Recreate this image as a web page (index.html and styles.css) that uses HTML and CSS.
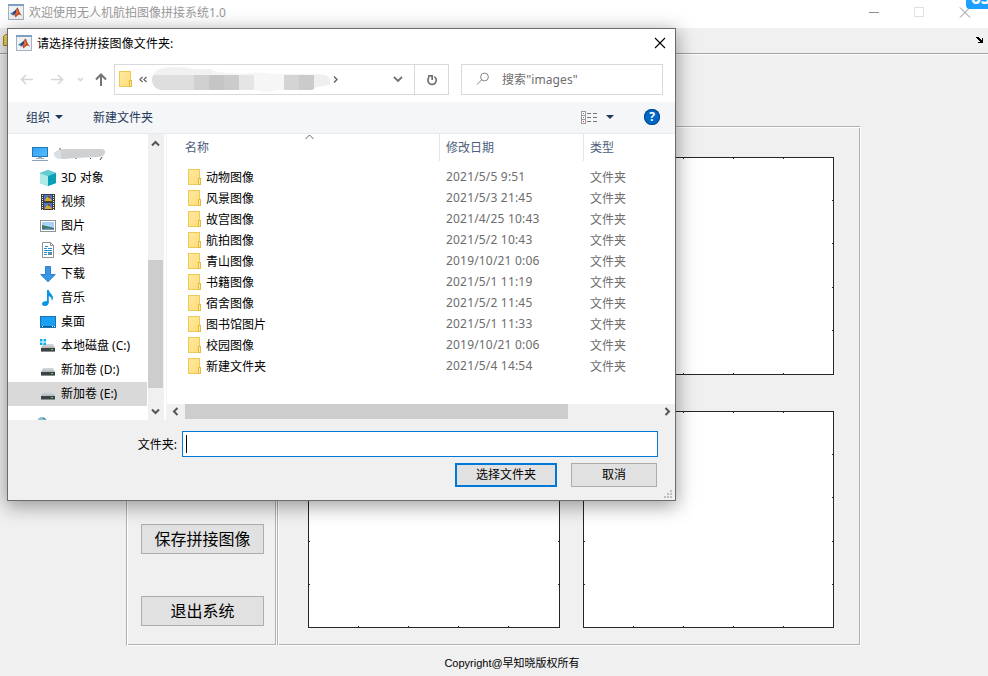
FILE: index.html
```html
<!DOCTYPE html>
<html lang="zh-CN">
<head>
  <meta charset="UTF-8">
  <meta name="viewport" content="width=device-width, initial-scale=1.0">
  <title>欢迎使用无人机航拍图像拼接系统1.0</title>
  <link rel="stylesheet" href="styles.css">
</head>
<body>

  <!-- Shared icons -->
  <svg class="icon-defs" width="0" height="0">
    <linearGradient id="folderFill" x1="0" y1="0" x2="1" y2="1">
      <stop offset="0" stop-color="#ffe9a2"/><stop offset="1" stop-color="#ffdc78"/>
    </linearGradient>
    <linearGradient id="screenFill" x1="0" y1="0" x2="1" y2="1">
      <stop offset="0" stop-color="#2ba0f5"/><stop offset="1" stop-color="#5cc0ff"/>
    </linearGradient>
    <linearGradient id="driveTop" x1="0" y1="0" x2="0" y2="1">
      <stop offset="0" stop-color="#d9dcde"/><stop offset="1" stop-color="#b3b6b9"/>
    </linearGradient>
    <symbol id="matlab" viewBox="0 0 16 16">
      <rect x=".5" y=".5" width="15" height="15" fill="#edf1f4" stroke="#a3b1c0"/>
      <rect x="0" y="0" width="16" height="2" fill="#7f9fc0"/>
      <path d="M2 9.500l3-1.500 2 1.500-2 2z" fill="#3d86c0"/>
      <path d="M5 8l2-1.500L9 4l-1 5-2.500 2.500L5 10z" fill="#36436e"/>
      <path d="M9 3.500l1 .5 1.500 4 2.500 4-2-1.500-2 .5-2.500 2.500-1-2.500L8 9z" fill="#c9421f"/>
      <path d="M9 5l.8 4-1.500 2.500z" fill="#ec9a45"/>
    </symbol>
    <symbol id="folder" viewBox="0 0 13 16">
      <rect x=".5" y=".5" width="11" height="15" fill="url(#folderFill)" stroke="#eeca55"/>
      <rect x="10.5" y="9.5" width="2" height="6" fill="#ffe9a2" stroke="#e3bb3d"/>
    </symbol>
    <symbol id="drive" viewBox="0 0 16 16">
      <path d="M3 6h10l2 4H1z" fill="url(#driveTop)"/>
      <rect x="1" y="10" width="14" height="4" fill="#3f4245"/>
      <rect x="1" y="13" width="14" height="1" fill="#8a8d90"/>
      <rect x="11" y="11" width="2" height="1" fill="#35f04c"/>
    </symbol>
  </svg>

  <div class="main-titlebar">
    <svg class="app-icon" width="16" height="16"><use href="#matlab"/></svg>
    <span class="main-title">欢迎使用无人机航拍图像拼接系统1.0</span>
    <svg class="window-controls" width="104" height="12" fill="none">
      <path d="M0 6.500h10" stroke="#8c8c8c"/>
      <rect x="45.500" y="1.500" width="9" height="9" stroke="#e0e0e0"/>
      <path d="M91 1.500l10 10M101 1.500l-10 10" stroke="#8c8c8c"/>
    </svg>
  </div>
  <div class="badge">63</div>

  <div class="main-toolbar">
    <svg width="16" height="16" viewBox="0 0 16 16"><path d="M1.500 13.500v-9l2-2h4l1 2h5v9z" fill="#f0d460" stroke="#a88414"/></svg>
    <svg class="dock-arrow" width="8" height="6"><path d="M0 0h3v1h1v1h1v1h1V1h1v5H2V5h2V4H3V3H2V2H1V1H0z" fill="#000"/></svg>
  </div>

  <div class="workspace">
    <div class="panel control-panel">
      <button class="main-btn">保存拼接图像</button>
      <button class="main-btn">退出系统</button>
    </div>
    <div class="panel axes-panel">
      <div class="axes"></div>
      <div class="axes"></div>
      <div class="axes"></div>
      <div class="axes"></div>
    </div>
  </div>
  <div class="copyright">Copyright@早知晓版权所有</div>

  <div class="dialog">
    <div class="dialog-titlebar">
      <svg width="16" height="16"><use href="#matlab"/></svg>
      <span class="dialog-title">请选择待拼接图像文件夹:</span>
      <svg class="dialog-close" width="12" height="12"><path d="M1 1l10 10M11 1L1 11" stroke="#000" stroke-width="1.100"/></svg>
    </div>

    <div class="nav-row">
      <svg class="nav-arrows" width="88" height="16" fill="none" stroke-width="1.700">
        <path d="M13 7.500H1.500M6 3L1.500 7.500 6 12" stroke="#d6d6d6"/>
        <path d="M31 7.500h11.500M38 3l4.500 4.500L38 12" stroke="#d6d6d6"/>
        <path d="M58 6l2.500 2.500L63 6" stroke="#d6d6d6"/>
        <path d="M81 14V2.500M76 7.500l5-5 5 5" stroke="#737373" stroke-width="2"/>
      </svg>
      <div class="address">
        <svg class="address-folder" width="13" height="16"><use href="#folder"/></svg>
        <svg class="address-path" width="201" height="28">
          <path d="M5.500 11L3 13.500 5.500 16M9.500 11L7 13.500 9.500 16" fill="none" stroke="#666" stroke-width="1.300"/>
          <clipPath id="smudge"><path d="M15 13Q16 6 22 3Q38-1 57 3H73L80 6L105 8Q118 5 135 8H175Q190 7 193 13V19L180 21L175 24H140Q130 28 118 24H24Q15 22 15 14z"/></clipPath>
          <g clip-path="url(#smudge)">
            <rect x="15" y="0" width="60" height="10" fill="#f1f1f1"/>
            <rect x="75" y="0" width="120" height="10" fill="#f5f5f5"/>
            <rect x="15" y="9" width="42" height="15" fill="#dedede"/>
            <rect x="57" y="9" width="15" height="15" fill="#d0d0d0"/>
            <rect x="72" y="9" width="15" height="15" fill="#c5c5c5"/>
            <rect x="87" y="9" width="15" height="15" fill="#cbcbcb"/>
            <rect x="102" y="9" width="15" height="15" fill="#e5e5e5"/>
            <rect x="117" y="9" width="30" height="18" fill="#f6f6f6"/>
            <rect x="147" y="9" width="15" height="15" fill="#d4d4d4"/>
            <rect x="162" y="9" width="15" height="15" fill="#cbcbcb"/>
            <rect x="177" y="9" width="18" height="15" fill="#efefef"/>
          </g>
          <path d="M197 10.500l3 3-3 3" fill="none" stroke="#666" stroke-width="1.500"/>
        </svg>
        <svg class="address-drop" width="10" height="7"><path d="M1 1l4 4 4-4" fill="none" stroke="#707070" stroke-width="1.800"/></svg>
        <div class="refresh">
          <svg width="12" height="12" fill="none" stroke="#707070" stroke-width="1.700"><path d="M8.300 2.600A4.200 4.200 0 1 1 3.200 3.100M2 1.800h4.200V6"/></svg>
        </div>
      </div>
      <div class="search">
        <svg width="14" height="14" fill="none" stroke="#858585"><circle cx="8.500" cy="5" r="3.900"/><path d="M5.700 7.800L1 12.500"/></svg>
        <span>搜索"images"</span>
      </div>
    </div>

    <div class="command-bar">
      <span>组织</span>
      <i class="caret"></i>
      <span class="new-folder">新建文件夹</span>
      <svg class="view-icon" width="17" height="13">
        <rect x=".5" y=".5" width="4" height="12" fill="#fff" stroke="#999"/>
        <path d="M0 4.500h5M0 8.500h5" stroke="#999"/>
        <rect x="2" y="2" width="1" height="1" fill="#777"/><rect x="2" y="6" width="1" height="1" fill="#3492d8"/><rect x="2" y="10" width="1" height="1" fill="#d22"/>
        <path d="M6 2.500h4M12 2.500h4M6 6.500h4M12 6.500h4M6 10.500h4M12 10.500h4" stroke="#777"/>
      </svg>
      <i class="caret"></i>
      <span class="help">?</span>
    </div>

    <div class="dialog-body">
      <div class="tree">
        <div class="tree-item root">
          <svg width="18" height="16"><rect x="1.500" y="1.500" width="15" height="9" fill="url(#screenFill)" stroke="#2277b5"/><path d="M7 11h4v1H7zM5 12h8v1H5z" fill="#9cb3c5"/><path d="M1 14.500h16" stroke="#8ba3b8"/></svg>
          <svg class="smear" width="54" height="14"><path d="M6 1v2M22 11v1M37 11l-1 1M48 10l-2 3" stroke="#444"/><path d="M0 6Q4 2 11 2H47Q52 2 51 6Q50 10 43 10L20 11Q2 14 0 8z" fill="#cfd0d1"/><path d="M0 6l7-3v9Q1 12 0 8z" fill="#d8e1e8"/></svg>
        </div>
        <div class="tree-item">
          <svg width="16" height="16"><path d="M0 3l8-3 8 3v10l-8 3-8-3z" fill="#25b6c8"/><path d="M0 3l8 3v10l-8-3z" fill="#aee9e5"/><path d="M8 6l8-3v10l-8 3z" fill="#0a9eb7"/><path d="M0 3l8-3 8 3-8 3z" fill="#63cbd2"/></svg>
          <span>3D 对象</span>
        </div>
        <div class="tree-item">
          <svg width="16" height="16"><rect x="1" width="14" height="16" fill="#3d3d3d"/><path d="M2.500 1v15M13.500 1v15" stroke="#eee" stroke-dasharray="1 1"/><rect x="4" y="1" width="8" height="6" fill="#4878c4"/><rect x="4" y="9" width="8" height="6" fill="#4878c4"/><path d="M5 6l2-3 2 1 3 2v1H5zM5 14l2-3 2 1 3 2v1H5z" fill="#dcab2b"/><path d="M8 2h2v2H8zM8 10h2v2H8z" fill="#a34725"/></svg>
          <span>视频</span>
        </div>
        <div class="tree-item">
          <svg width="16" height="16"><rect x=".5" y="2.500" width="15" height="11" fill="#fff" stroke="#929292"/><rect x="2" y="4" width="12" height="8" fill="#a8d2f5"/><path d="M2 7l4 1 8 2v2H2z" fill="#42706b"/><path d="M2 11q6-1 12 0v1H2z" fill="#6aa0ba"/></svg>
          <span>图片</span>
        </div>
        <div class="tree-item">
          <svg width="16" height="16"><path d="M2.500.5h8l3 3v12h-11z" fill="#fff" stroke="#8f8f8f"/><path d="M10.500.5v3h3" fill="none" stroke="#8f8f8f"/><path d="M5 4.500h3M4 6.500h3M8 6.500h4M4 8.500h8M4 10.500h3M4 12.500h3" stroke="#2b8fd8"/><path d="M8 10h4v3H8z" fill="#5b91a8"/></svg>
          <span>文档</span>
        </div>
        <div class="tree-item">
          <svg width="16" height="16"><path d="M5.500.5h5v8h4.800L8 15.700.7 8.500h4.800z" fill="#3a96e3" stroke="#2a82cf"/></svg>
          <span>下载</span>
        </div>
        <div class="tree-item">
          <svg width="16" height="16"><path d="M7 0h1.800q.4 2.500 2.800 4.500Q14.500 8 11.500 11q1-3.500-2.700-5v7Q8 16 5 16q-3 0-3-2.200Q2.500 11 7 11z" fill="#0795e6"/></svg>
          <span>音乐</span>
        </div>
        <div class="tree-item">
          <svg width="16" height="16"><rect x=".5" y="2.500" width="15" height="11" fill="#1b9ff3" stroke="#1474b4"/><path d="M1 12.500h14" stroke="#0a5a96"/><path d="M2 12.500h1M12 12.500h1M14 12.500h1" stroke="#fff"/></svg>
          <span>桌面</span>
        </div>
        <div class="tree-item">
          <svg width="16" height="16"><use href="#drive"/><path d="M0 1h2.500v2.500H0zM3.500 1H6v2.500H3.500zM0 4.500h2.500V7H0zM3.500 4.500H6V7H3.500z" fill="#06b3ea"/></svg>
          <span>本地磁盘 (C:)</span>
        </div>
        <div class="tree-item">
          <svg width="16" height="16"><use href="#drive"/></svg>
          <span>新加卷 (D:)</span>
        </div>
        <div class="tree-item selected">
          <svg width="16" height="16"><use href="#drive"/></svg>
          <span>新加卷 (E:)</span>
        </div>
        <div class="tree-item network">
          <svg width="16" height="16"><circle cx="8" cy="8" r="5" fill="#8fc0d3"/><path d="M8 4q3-1 4 2z" fill="#3a7fa8"/></svg>
        </div>
      </div>
      <div class="vscroll">
        <svg width="9" height="7"><path d="M1 5.500L4.500 2 8 5.500" fill="none" stroke="#555" stroke-width="2"/></svg>
        <div class="vthumb"></div>
        <svg width="9" height="7"><path d="M1 1.500L4.500 5 8 1.500" fill="none" stroke="#555" stroke-width="2"/></svg>
      </div>

      <div class="file-view">
        <div class="file-header">
          <span class="col-name">名称</span>
          <svg class="sort-mark" width="9" height="6"><path d="M.5 5l4-4 4 4" fill="none" stroke="#666"/></svg>
          <span class="col-date">修改日期</span>
          <span class="col-type">类型</span>
        </div>
        <div class="file-list">
          <div class="file-row"><svg width="13" height="16"><use href="#folder"/></svg><span class="name">动物图像</span><span class="date">2021/5/5 9:51</span><span>文件夹</span></div>
          <div class="file-row"><svg width="13" height="16"><use href="#folder"/></svg><span class="name">风景图像</span><span class="date">2021/5/3 21:45</span><span>文件夹</span></div>
          <div class="file-row"><svg width="13" height="16"><use href="#folder"/></svg><span class="name">故宫图像</span><span class="date">2021/4/25 10:43</span><span>文件夹</span></div>
          <div class="file-row"><svg width="13" height="16"><use href="#folder"/></svg><span class="name">航拍图像</span><span class="date">2021/5/2 10:43</span><span>文件夹</span></div>
          <div class="file-row"><svg width="13" height="16"><use href="#folder"/></svg><span class="name">青山图像</span><span class="date">2019/10/21 0:06</span><span>文件夹</span></div>
          <div class="file-row"><svg width="13" height="16"><use href="#folder"/></svg><span class="name">书籍图像</span><span class="date">2021/5/1 11:19</span><span>文件夹</span></div>
          <div class="file-row"><svg width="13" height="16"><use href="#folder"/></svg><span class="name">宿舍图像</span><span class="date">2021/5/2 11:45</span><span>文件夹</span></div>
          <div class="file-row"><svg width="13" height="16"><use href="#folder"/></svg><span class="name">图书馆图片</span><span class="date">2021/5/1 11:33</span><span>文件夹</span></div>
          <div class="file-row"><svg width="13" height="16"><use href="#folder"/></svg><span class="name">校园图像</span><span class="date">2019/10/21 0:06</span><span>文件夹</span></div>
          <div class="file-row"><svg width="13" height="16"><use href="#folder"/></svg><span class="name">新建文件夹</span><span class="date">2021/5/4 14:54</span><span>文件夹</span></div>
        </div>
        <div class="hscroll">
          <svg width="7" height="9"><path d="M5.500 1L2 4.500 5.500 8" fill="none" stroke="#555" stroke-width="2"/></svg>
          <div class="hthumb"></div>
          <svg width="7" height="9"><path d="M1.500 1L5 4.500 1.500 8" fill="none" stroke="#555" stroke-width="2"/></svg>
        </div>
      </div>
    </div>

    <div class="dialog-footer">
      <div class="folder-field">
        <span class="field-label">文件夹:</span>
        <div class="folder-input"><i class="text-cursor"></i></div>
      </div>
      <div class="dialog-actions">
        <button class="dialog-btn primary">选择文件夹</button>
        <button class="dialog-btn">取消</button>
      </div>
      <svg class="grip" width="8" height="8" fill="#bfbfbf"><path d="M6 0h2v2H6zM3 3h2v2H3zM6 3h2v2H6zM0 6h2v2H0zM3 6h2v2H3zM6 6h2v2H6z"/></svg>
    </div>
  </div>

</body>
</html>
```
FILE: styles.css
```css
* { margin: 0; padding: 0; box-sizing: border-box; }
body {
  width: 988px;
  height: 676px;
  overflow: hidden;
  background: #f0f0f0;
  font-family: "Noto Sans", "Noto Sans CJK SC", sans-serif;
  font-size: 12px;
  color: #000;
  position: relative;
}
svg { display: block; flex-shrink: 0; }
span { white-space: nowrap; }
button { font-family: inherit; }
.icon-defs { position: absolute; }

/* Main window */
.main-titlebar {
  height: 28px;
  background: #fff;
  display: flex;
  align-items: center;
  padding: 0 15px 4px 8px;
}
.main-title { margin-left: 5px; color: #999; }
.window-controls { margin-left: auto; }
.badge {
  position: absolute;
  top: -14px;
  left: 966px;
  width: 40px;
  height: 23px;
  padding-left: 5px;
  border-radius: 4px;
  background: #1e9fff;
  color: #fff;
  font-size: 17px;
  font-weight: bold;
  line-height: 24px;
}
.main-toolbar {
  height: 27px;
  display: flex;
  align-items: center;
  justify-content: space-between;
  padding: 0 4px 2px 2px;
  border-bottom: 1px solid #fff;
  box-shadow: inset 0 -1px #a0a0a0;
}
.workspace { display: flex; padding: 71px 0 0 126px; }
.panel {
  height: 520px;
  border: 1px solid #b0b0b0;
  border-right-color: #fff;
  border-bottom-color: #fff;
  box-shadow: inset 1px 1px #fff, inset -1px -1px #b0b0b0;
}
.control-panel {
  width: 151px;
  display: flex;
  flex-direction: column;
  align-items: flex-start;
  justify-content: flex-end;
  gap: 42px;
  padding: 0 0 19px 14px;
}
.main-btn {
  width: 123px;
  height: 30px;
  background: #e1e1e1;
  border: 1px solid #adadad;
  font-size: 16px;
  line-height: 26px;
}
.axes-panel {
  width: 584px;
  display: grid;
  grid-template-columns: 252px 251px;
  grid-template-rows: 218px 217px;
  gap: 36px 23px;
  padding: 30px 0 0 30px;
}
.axes {
  border: 1px solid #262626;
  background:
    repeating-linear-gradient(90deg, transparent 0 49px, #262626 49px 50px) 0 0 / 248px 1px no-repeat,
    repeating-linear-gradient(90deg, transparent 0 49px, #262626 49px 50px) 0 100% / 248px 1px no-repeat,
    repeating-linear-gradient(transparent 0 42.2px, #262626 42.2px 43.2px) 0 0 / 1px 214px no-repeat,
    repeating-linear-gradient(transparent 0 42.2px, #262626 42.2px 43.2px) 100% 0 / 1px 214px no-repeat,
    #fff;
}
.copyright {
  padding: 8px 0 0 36px;
  text-align: center;
  font-family: "Liberation Sans", "Noto Sans CJK SC", sans-serif;
  font-size: 11px;
}

/* Folder dialog */
.dialog {
  position: absolute;
  left: 7px;
  top: 28px;
  width: 669px;
  height: 473px;
  display: flex;
  flex-direction: column;
  background: #fff;
  border: 1px solid #6b6b6b;
  box-shadow: 0 4px 18px 1px rgba(0,0,0,0.38);
}
.dialog-titlebar {
  height: 28px;
  display: flex;
  align-items: center;
  padding: 0 9px 0 8px;
}
.dialog-title { margin-left: 5px; letter-spacing: 0.1px; }
.dialog-close { margin-left: auto; }
.nav-row {
  height: 45px;
  display: flex;
  padding: 7px 12px 7px 12px;
}
.nav-arrows { margin-top: 8px; }
.address {
  width: 335px;
  height: 31px;
  margin-left: 6px;
  border: 1px solid #d9d9d9;
  display: flex;
  align-items: center;
}
.address-folder { margin: 0 5px 2px 4px; }
.address-path { margin-right: 55px; }
.refresh {
  width: 34px;
  height: 29px;
  margin-left: auto;
  border-left: 1px solid #d9d9d9;
  display: flex;
  align-items: center;
  justify-content: center;
}
.search {
  width: 202px;
  height: 31px;
  margin-left: 12px;
  padding: 0 0 1px 14px;
  border: 1px solid #d9d9d9;
  display: flex;
  align-items: center;
  gap: 12px;
  color: #6d6d6d;
  letter-spacing: 0.1px;
}
.command-bar {
  height: 32px;
  background: #f5f6f7;
  border-bottom: 1px solid #e8e9eb;
  display: flex;
  align-items: center;
  padding: 0 15px 1px 18px;
  color: #1e395b;
}
.caret {
  margin-left: 5px;
  border: 4px solid transparent;
  border-top-color: #1e395b;
  border-bottom: 0;
}
.new-folder { margin-left: 30px; }
.view-icon { margin-left: auto; }
.view-icon + .caret { margin-left: 8px; }
.help {
  width: 16px;
  height: 16px;
  margin-left: 30px;
  border-radius: 50%;
  background: #0067c6;
  box-shadow: inset 0 0 0 1px #074a8b;
  color: #fff;
  font-weight: bold;
  line-height: 16px;
  text-align: center;
}
.dialog-body { height: 286px; display: flex; }
.tree { width: 140px; padding-top: 8px; overflow: hidden; }
.tree-item {
  width: 139px;
  height: 24px;
  display: flex;
  align-items: center;
  gap: 5px;
  padding-left: 32px;
}
.tree-item span { padding-bottom: 2px; }
.tree-item.root { padding-left: 23px; }
.tree-item.selected { background: #d9d9d9; }
.tree-item.network { padding: 8px 0 0 26px; }
.vscroll {
  width: 16px;
  background: #f0f0f0;
  display: flex;
  flex-direction: column;
  align-items: flex-start;
  padding: 6px 0 5px;
}
.vscroll svg { margin-left: 3px; }
.vthumb { width: 15px; height: 128px; margin: 113px 0 20px; background: #cdcdcd; }
.file-view {
  flex: 1;
  margin-left: 2px;
  border-left: 1px solid #f3f3f3;
}
.file-header {
  height: 27px;
  display: flex;
  color: #4c607a;
  line-height: 28px;
}
.col-name { width: 138px; padding-left: 18px; }
.sort-mark { width: 9px; margin-right: 125px; }
.col-date { width: 144px; padding-left: 6px; border-left: 1px solid #e5e5e5; }
.col-type { padding-left: 6px; border-left: 1px solid #e5e5e5; }
.file-list { height: 243px; padding: 6px 0 0 21px; }
.file-row {
  height: 21px;
  display: flex;
  align-items: center;
  color: #6d6d6d;
}
.file-row svg { margin-bottom: 1px; }
.file-row span { padding-bottom: 2px; }
.name { width: 240px; margin-left: 5px; color: #000; }
.date { width: 144px; letter-spacing: 0.18px; }
.hscroll {
  height: 16px;
  background: #f0f0f0;
  display: flex;
  align-items: center;
  padding: 0 4px 1px 5px;
}
.hthumb { width: 383px; height: 15px; margin: 0 auto 0 6px; background: #cdcdcd; }
.dialog-footer {
  flex: 1;
  background: #f0f0f0;
  padding: 11px 17px 0 0;
  position: relative;
}
.folder-field {
  display: flex;
  align-items: center;
  justify-content: flex-end;
  gap: 5px;
}
.field-label { padding-bottom: 1px; }
.folder-input {
  width: 476px;
  height: 26px;
  padding: 3px;
  background: #fff;
  border: 1px solid #0078d7;
}
.text-cursor { display: block; width: 1px; height: 18px; background: #000; }
.dialog-actions {
  display: flex;
  justify-content: flex-end;
  gap: 14px;
  margin-top: 6px;
  padding-right: 1px;
}
.dialog-btn {
  width: 86px;
  height: 24px;
  background: #e1e1e1;
  border: 1px solid #adadad;
  font-size: 12px;
  line-height: 20px;
}
.dialog-btn.primary { width: 102px; border: 2px solid #0078d7; }
.grip { position: absolute; right: 3px; bottom: 2px; }
```
